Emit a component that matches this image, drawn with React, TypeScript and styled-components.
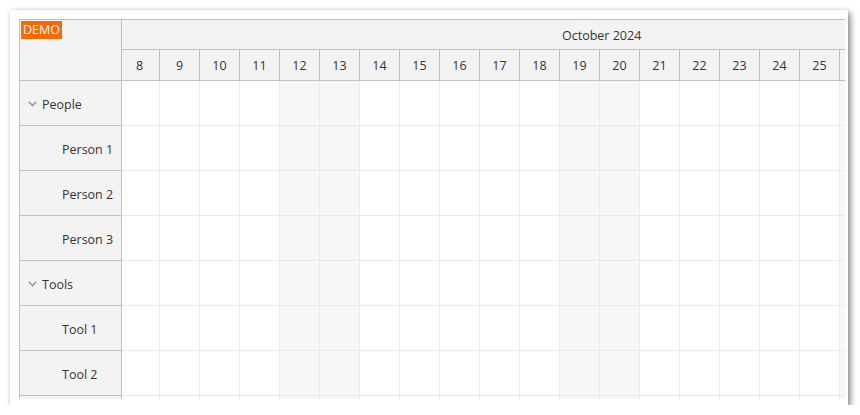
import styled, { createGlobalStyle } from "styled-components";

const days = [8, 9, 10, 11, 12, 13, 14, 15, 16, 17, 18, 19, 20, 21, 22, 23, 24, 25, 26];
const weekend = [12, 13, 19, 20, 26];
const lastVisibleDay = 25;

const resources = [
    { id: "people", name: "People", group: true },
    { id: "p1", name: "Person 1" },
    { id: "p2", name: "Person 2" },
    { id: "p3", name: "Person 3" },
    { id: "tools", name: "Tools", group: true },
    { id: "t1", name: "Tool 1" },
    { id: "t2", name: "Tool 2" },
    { id: "t3", name: "" },
];

const GlobalStyle = createGlobalStyle`
    body {
        margin: 0;
        background: #fff;
        font-family: "Open Sans", "Noto Sans", sans-serif;
        color: #333;
    }
`;

const Frame = styled.div`
    margin: 10px 0 0 10px;
    width: 838px;
    height: 395px;
    box-sizing: border-box;
    padding: 9px 0 0 9px;
    background: #fff;
    box-shadow: 3px 3px 6px rgba(0, 0, 0, 0.4), 0 0 4px rgba(0, 0, 0, 0.15);
`;

const Scheduler = styled.div`
    width: 826px;
    height: 380px;
    box-sizing: border-box;
    border-top: 1px solid #c0c0c0;
    border-left: 1px solid #c0c0c0;
    overflow: hidden;
    display: grid;
    grid-template-columns: 102px 1fr;
    grid-template-rows: 61px 1fr;
    font-size: 12.5px;
`;

const Corner = styled.div`
    position: relative;
    box-sizing: border-box;
    background: #f3f3f3;
    border-right: 1px solid #c0c0c0;
    border-bottom: 1px solid #c0c0c0;
`;

const Demo = styled.span`
    position: absolute;
    top: 1px;
    left: 1px;
    width: 41px;
    height: 18px;
    background: #ff6600;
    color: #fff;
    font-size: 12.5px;
    line-height: 18px;
    text-align: center;
`;

const TimeHeader = styled.div`
    overflow: hidden;
    background: #f3f3f3;
`;

const MonthRow = styled.div`
    height: 30px;
    box-sizing: border-box;
    border-bottom: 1px solid #c0c0c0;
    display: flex;
    align-items: center;
    padding: 2px 0 0 440px;
`;

const Track = styled.div`
    display: flex;
    margin-left: -2px;
`;

const DayCell = styled.div`
    flex: 0 0 40px;
    height: 31px;
    box-sizing: border-box;
    border-right: 1px solid #c0c0c0;
    border-bottom: 1px solid #c0c0c0;
    display: flex;
    align-items: center;
    justify-content: center;
`;

const RowHeaders = styled.div`
    overflow: hidden;
    min-height: 0;
`;

const RowHeader = styled.div<{ $group?: boolean }>`
    height: 45px;
    box-sizing: border-box;
    background: #f3f3f3;
    border-right: 1px solid #c0c0c0;
    border-bottom: 1px solid #c0c0c0;
    display: flex;
    align-items: center;
    gap: 5px;
    padding: 2px 0 0 ${({ $group }) => ($group ? "8px" : "42px")};
`;

const Chevron = styled.svg`
    width: 9px;
    height: 6px;
    flex: none;
    margin-top: -1px;
`;

const Grid = styled.div`
    overflow: hidden;
    min-height: 0;
`;

const GridRow = styled.div`
    display: flex;
    margin-left: -2px;
    height: 45px;
    box-sizing: border-box;
    border-bottom: 1px solid #eaeaea;
`;

const Cell = styled.div<{ $weekend?: boolean }>`
    flex: 0 0 40px;
    box-sizing: border-box;
    border-right: 1px solid #eaeaea;
    background: ${({ $weekend }) => ($weekend ? "#f7f7f7" : "#fff")};
`;

export default function App() {
    return (
        <>
            <GlobalStyle />
            <Frame>
                <Scheduler>
                    <Corner>
                        <Demo>DEMO</Demo>
                    </Corner>
                    <TimeHeader>
                        <MonthRow>October 2024</MonthRow>
                        <Track>
                            {days.map((d) => (
                                <DayCell key={d}>{d <= lastVisibleDay ? d : null}</DayCell>
                            ))}
                        </Track>
                    </TimeHeader>
                    <RowHeaders>
                        {resources.map((r) => (
                            <RowHeader key={r.id} $group={r.group}>
                                {r.group && (
                                    <Chevron viewBox="0 0 9 6">
                                        <path d="M0.8 0.8 L4.5 4.6 L8.2 0.8" fill="none" stroke="#999" strokeWidth="1.5" />
                                    </Chevron>
                                )}
                                {r.name}
                            </RowHeader>
                        ))}
                    </RowHeaders>
                    <Grid>
                        {resources.map((r) => (
                            <GridRow key={r.id}>
                                {days.map((d) => (
                                    <Cell key={d} $weekend={weekend.includes(d)} />
                                ))}
                            </GridRow>
                        ))}
                    </Grid>
                </Scheduler>
            </Frame>
        </>
    );
}
